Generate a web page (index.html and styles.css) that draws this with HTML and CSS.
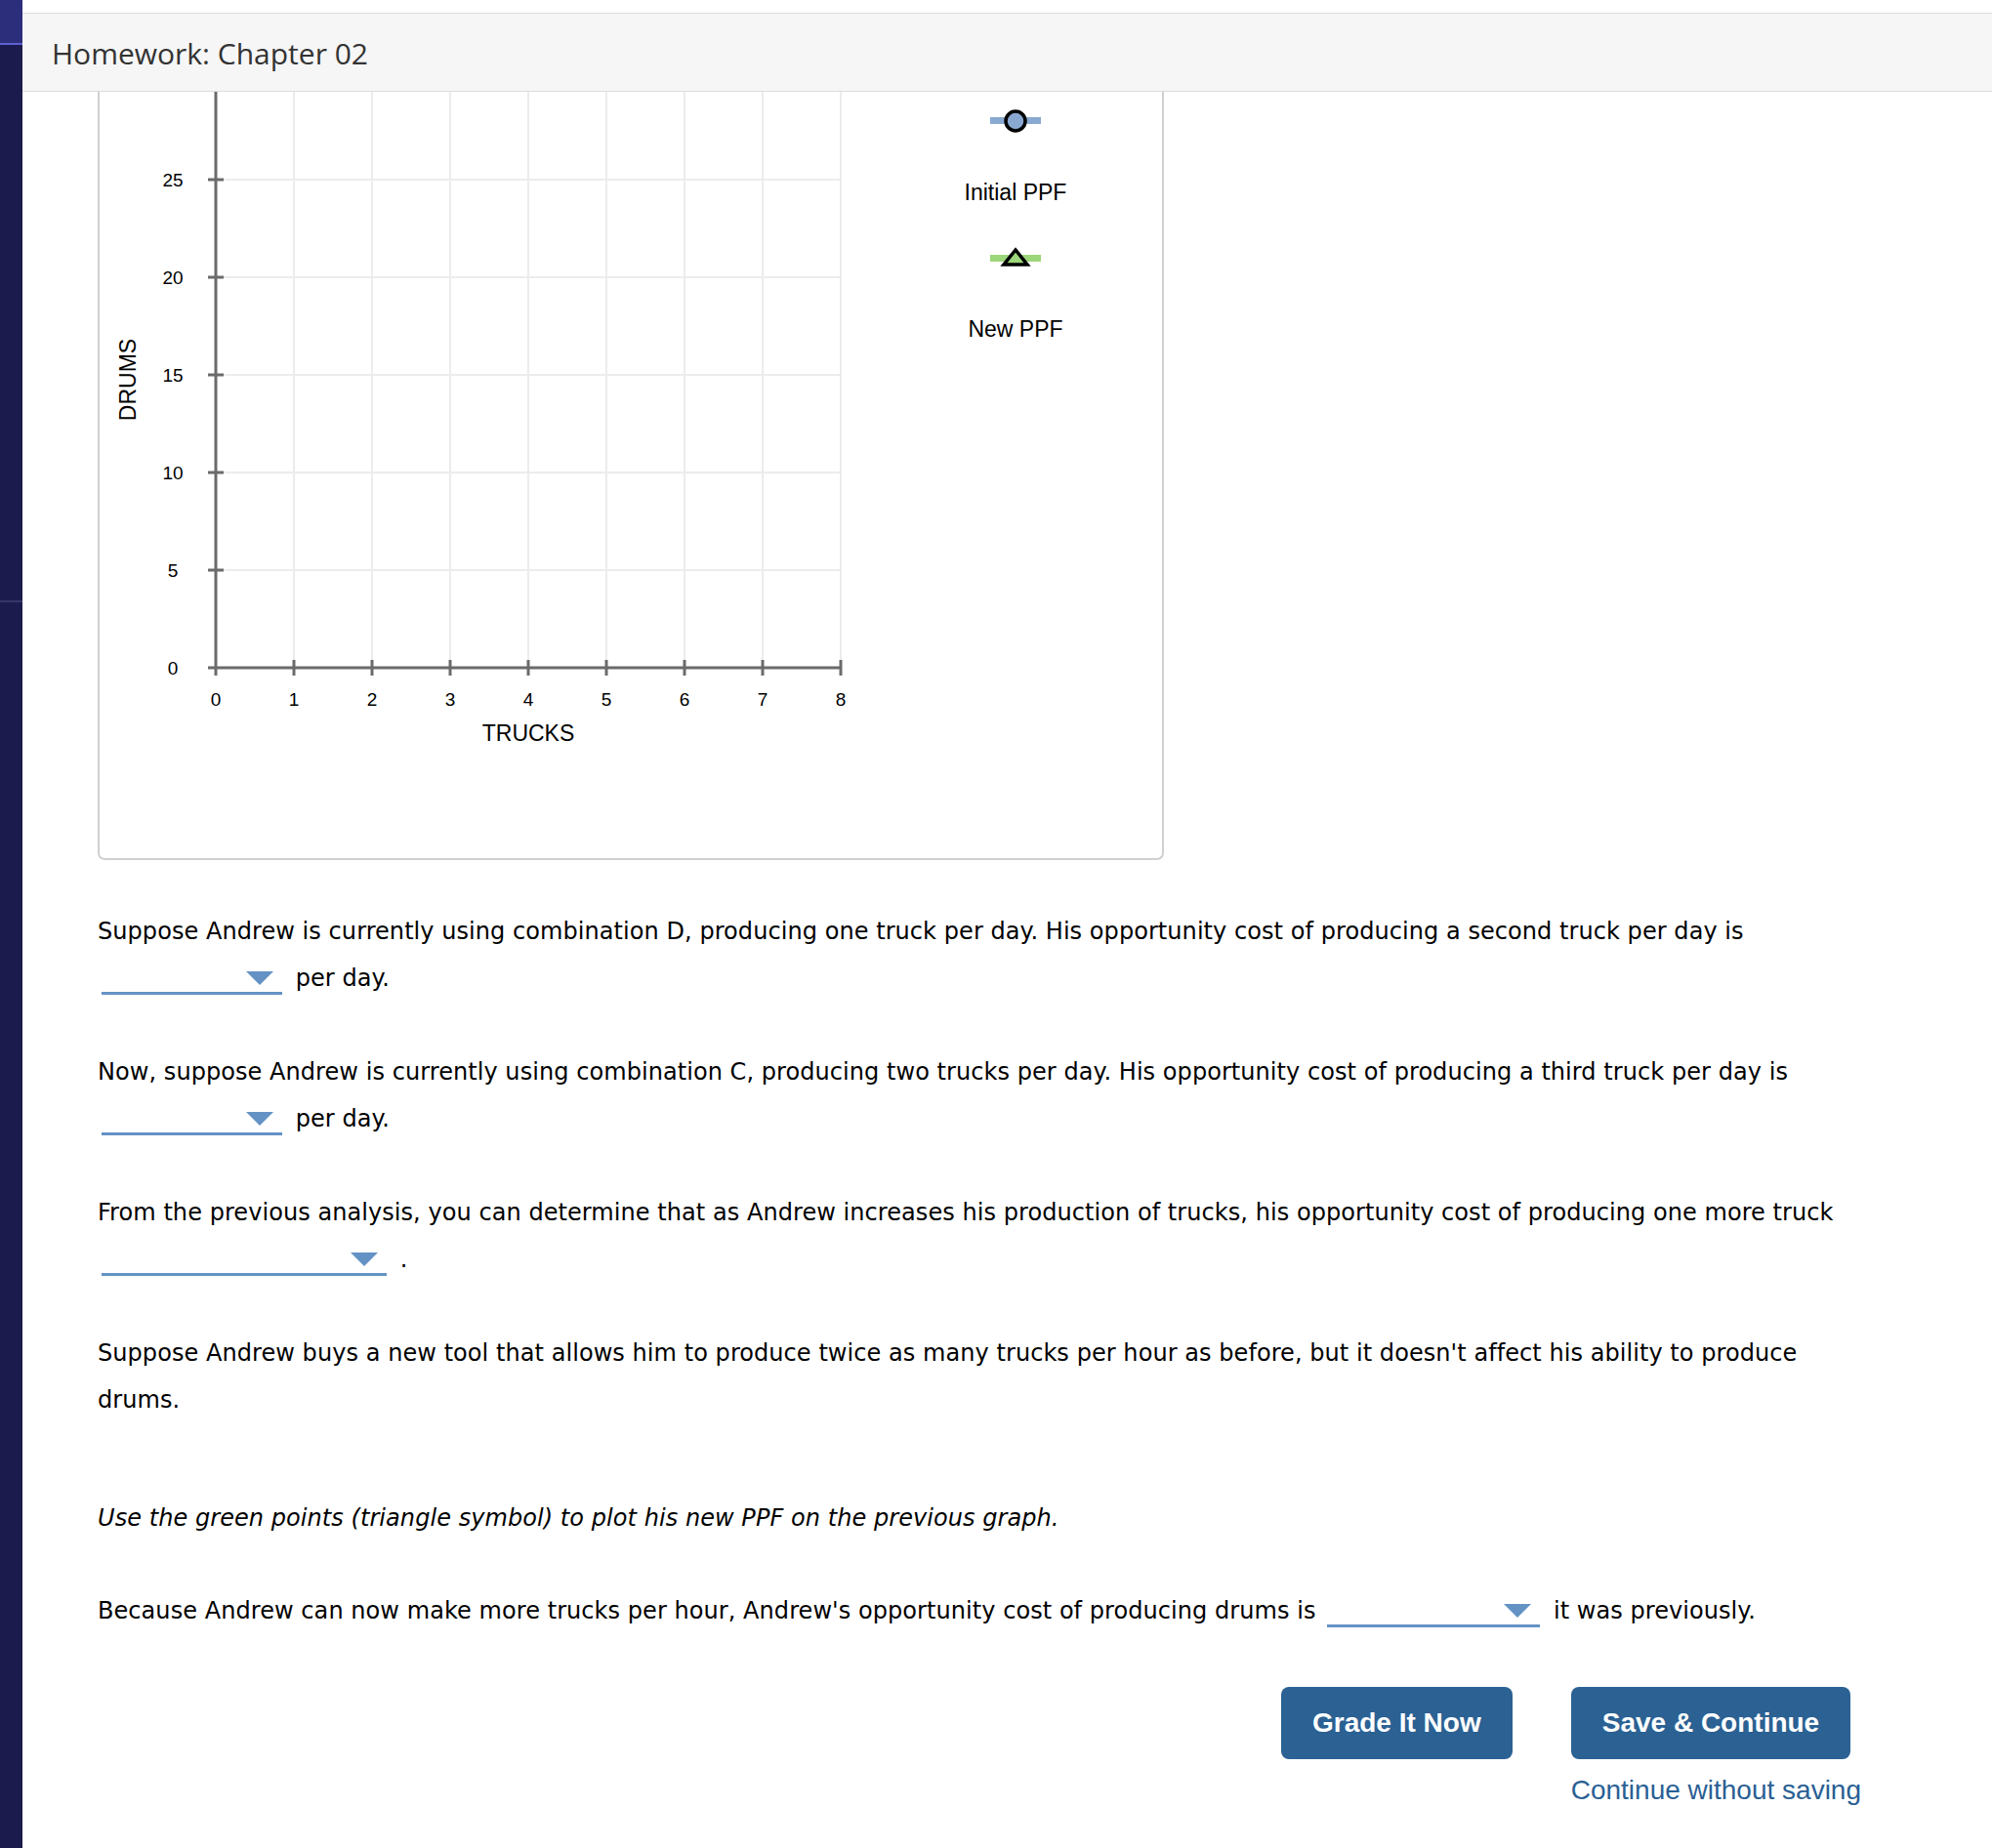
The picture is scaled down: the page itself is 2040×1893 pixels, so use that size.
FILE: index.html
```html
<!DOCTYPE html>
<html lang="en">
<head>
<meta charset="utf-8">
<title>Homework: Chapter 02</title>
<link rel="stylesheet" href="styles.css">
</head>
<body>
<div class="app">
  <aside class="sidebar">
    <div class="sidebar-top"></div>
    <div class="sidebar-mid"></div>
    <div class="sidebar-rest"></div>
  </aside>
  <main class="main">
    <header class="topbar">
      <h1 class="title">Homework: Chapter 02</h1>
    </header>
    <div class="content">
      <div class="graph-box">
        <svg class="graph" width="1088" height="785" viewBox="102 94 1088 785" xmlns="http://www.w3.org/2000/svg">
          <g class="grid" stroke="#ececec" stroke-width="2">
            <line x1="301" y1="94" x2="301" y2="684"/>
            <line x1="381" y1="94" x2="381" y2="684"/>
            <line x1="461" y1="94" x2="461" y2="684"/>
            <line x1="541" y1="94" x2="541" y2="684"/>
            <line x1="621" y1="94" x2="621" y2="684"/>
            <line x1="701" y1="94" x2="701" y2="684"/>
            <line x1="781" y1="94" x2="781" y2="684"/>
            <line x1="861" y1="94" x2="861" y2="684"/>
            <line x1="221" y1="584" x2="861" y2="584"/>
            <line x1="221" y1="484" x2="861" y2="484"/>
            <line x1="221" y1="384" x2="861" y2="384"/>
            <line x1="221" y1="284" x2="861" y2="284"/>
            <line x1="221" y1="184" x2="861" y2="184"/>
          </g>
          <g class="axes" stroke="#6b6b6b" stroke-width="3">
            <line x1="221" y1="94" x2="221" y2="692"/>
            <line x1="213" y1="684" x2="861" y2="684"/>
            <line x1="213" y1="584" x2="229" y2="584"/>
            <line x1="213" y1="484" x2="229" y2="484"/>
            <line x1="213" y1="384" x2="229" y2="384"/>
            <line x1="213" y1="284" x2="229" y2="284"/>
            <line x1="213" y1="184" x2="229" y2="184"/>
            <line x1="301" y1="676" x2="301" y2="692"/>
            <line x1="381" y1="676" x2="381" y2="692"/>
            <line x1="461" y1="676" x2="461" y2="692"/>
            <line x1="541" y1="676" x2="541" y2="692"/>
            <line x1="621" y1="676" x2="621" y2="692"/>
            <line x1="701" y1="676" x2="701" y2="692"/>
            <line x1="781" y1="676" x2="781" y2="692"/>
            <line x1="861" y1="676" x2="861" y2="692"/>
          </g>
          <g class="tick-labels" text-anchor="middle">
            <text x="177" y="191">25</text>
            <text x="177" y="291">20</text>
            <text x="177" y="391">15</text>
            <text x="177" y="491">10</text>
            <text x="177" y="591">5</text>
            <text x="177" y="691">0</text>
          </g>
          <g class="tick-labels" text-anchor="middle">
            <text x="221" y="723">0</text>
            <text x="301" y="723">1</text>
            <text x="381" y="723">2</text>
            <text x="461" y="723">3</text>
            <text x="541" y="723">4</text>
            <text x="621" y="723">5</text>
            <text x="701" y="723">6</text>
            <text x="781" y="723">7</text>
            <text x="861" y="723">8</text>
          </g>
          <text class="axis-title" x="541" y="759" text-anchor="middle">TRUCKS</text>
          <text class="axis-title" x="0" y="8" text-anchor="middle" transform="translate(131,389) rotate(-90)">DRUMS</text>

          <g class="legend">
            <rect x="1014" y="120" width="52" height="7" fill="#89a9d2"/>
            <circle cx="1040" cy="124" r="10" fill="#89a9d2" stroke="#000" stroke-width="3.5"/>
            <text class="legend-label" x="1040" y="205" text-anchor="middle">Initial PPF</text>
            <rect x="1014" y="261" width="52" height="7" fill="#9dd57b"/>
            <polygon points="1040,256 1028,271 1052,271" fill="#9dd57b" stroke="#000" stroke-width="3.5" stroke-linejoin="miter"/>
            <text class="legend-label" x="1040" y="345" text-anchor="middle">New PPF</text>
          </g>
        </svg>
      </div>

      <section class="questions">
        <p class="q">Suppose Andrew is currently using combination D, producing one truck per day. His opportunity cost of producing a second truck per day is <span class="dd dd-sm"></span> per day.</p>
        <p class="q">Now, suppose Andrew is currently using combination C, producing two trucks per day. His opportunity cost of producing a third truck per day is <span class="dd dd-sm"></span> per day.</p>
        <p class="q">From the previous analysis, you can determine that as Andrew increases his production of trucks, his opportunity cost of producing one more truck <span class="dd dd-lg"></span> .</p>
        <p class="q">Suppose Andrew buys a new tool that allows him to produce twice as many trucks per hour as before, but it doesn't affect his ability to produce drums.</p>
        <p class="q q-italic">Use the green points (triangle symbol) to plot his new PPF on the previous graph.</p>
        <p class="q">Because Andrew can now make more trucks per hour, Andrew's opportunity cost of producing drums is <span class="dd dd-md"></span> it was previously.</p>
      </section>

      <div class="actions">
        <button class="btn" type="button">Grade It Now</button>
        <div class="save-col">
          <button class="btn" type="button">Save &amp; Continue</button>
          <a class="link" href="#">Continue without saving</a>
        </div>
      </div>
    </div>
  </main>
</div>
</body>
</html>
```

FILE: styles.css
```css
html, body {
  margin: 0;
  padding: 0;
  background: #ffffff;
}

.app {
  display: flex;
  min-height: 1893px;
  width: 2040px;
}

.sidebar {
  width: 23px;
  flex: 0 0 23px;
  display: flex;
  flex-direction: column;
  background: #1c1b4e;
}

.sidebar-top {
  height: 44px;
  background: #2d2e7b;
  border-bottom: 2px solid #5d61d0;
}

.sidebar-mid {
  height: 569px;
  border-bottom: 2px solid #35356a;
}

.sidebar-rest {
  flex: 1;
}

.main {
  flex: 1;
  display: flex;
  flex-direction: column;
  min-width: 0;
}

.topbar {
  margin-top: 13px;
  height: 79px;
  border-top: 1px solid #dcdcdc;
  border-bottom: 1px solid #dcdcdc;
  background: #f6f6f6;
  display: flex;
  align-items: center;
  padding-left: 30px;
}

.title {
  margin: 0;
  font-family: "Open Sans", "Noto Sans", sans-serif;
  font-weight: 400;
  font-size: 30px;
  color: #333333;
  padding-top: 1px;
}

.content {
  padding: 0 125px 0 77px;
}

.graph-box {
  width: 1092px;
  height: 787px;
  box-sizing: border-box;
  border: 2px solid #d0d0d0;
  border-top: none;
  border-radius: 0 0 7px 7px;
}

.graph {
  display: block;
}

.tick-labels text {
  font-family: "Liberation Sans", Arial, sans-serif;
  font-size: 19px;
  fill: #000;
}

.axis-title {
  font-family: "Liberation Sans", Arial, sans-serif;
  font-size: 23px;
  fill: #000;
}

.legend-label {
  font-family: "Liberation Sans", Arial, sans-serif;
  font-size: 23px;
  fill: #000;
}

.questions {
  padding-top: 49px;
}

.q {
  margin: 0 0 48px 0;
  font-family: "DejaVu Sans", sans-serif;
  font-size: 24px;
  line-height: 48px;
  letter-spacing: 0.06px;
  color: #000;
}

.q-italic {
  font-style: italic;
  margin-top: 73px;
  margin-bottom: 47px;
}

.dd {
  display: inline-block;
  position: relative;
  height: 30px;
  border-bottom: 3px solid #6492c4;
  vertical-align: -9px;
  margin: 0 6px 0 4px;
}

.dd::after {
  content: "";
  position: absolute;
  right: 9px;
  bottom: 7px;
  width: 0;
  height: 0;
  border-left: 14px solid transparent;
  border-right: 14px solid transparent;
  border-top: 14px solid #6492c4;
}

.dd-sm { width: 185px; }
.dd-md { width: 218px; }
.dd-lg { width: 292px; }

.actions {
  display: flex;
  justify-content: flex-end;
  align-items: flex-start;
  gap: 60px;
  margin-top: 54px;
  padding-right: 9px;
}

.save-col {
  display: flex;
  flex-direction: column;
  align-items: flex-start;
}

.btn {
  height: 74px;
  padding: 0 32px;
  border: none;
  border-radius: 8px;
  background: #2b6193;
  color: #ffffff;
  font-family: "Liberation Sans", Arial, sans-serif;
  font-weight: 700;
  font-size: 28px;
}

.link {
  margin-top: 16px;
  font-family: "Liberation Sans", Arial, sans-serif;
  font-size: 28px;
  line-height: 32px;
  color: #2a5f94;
  text-decoration: none;
}
```
